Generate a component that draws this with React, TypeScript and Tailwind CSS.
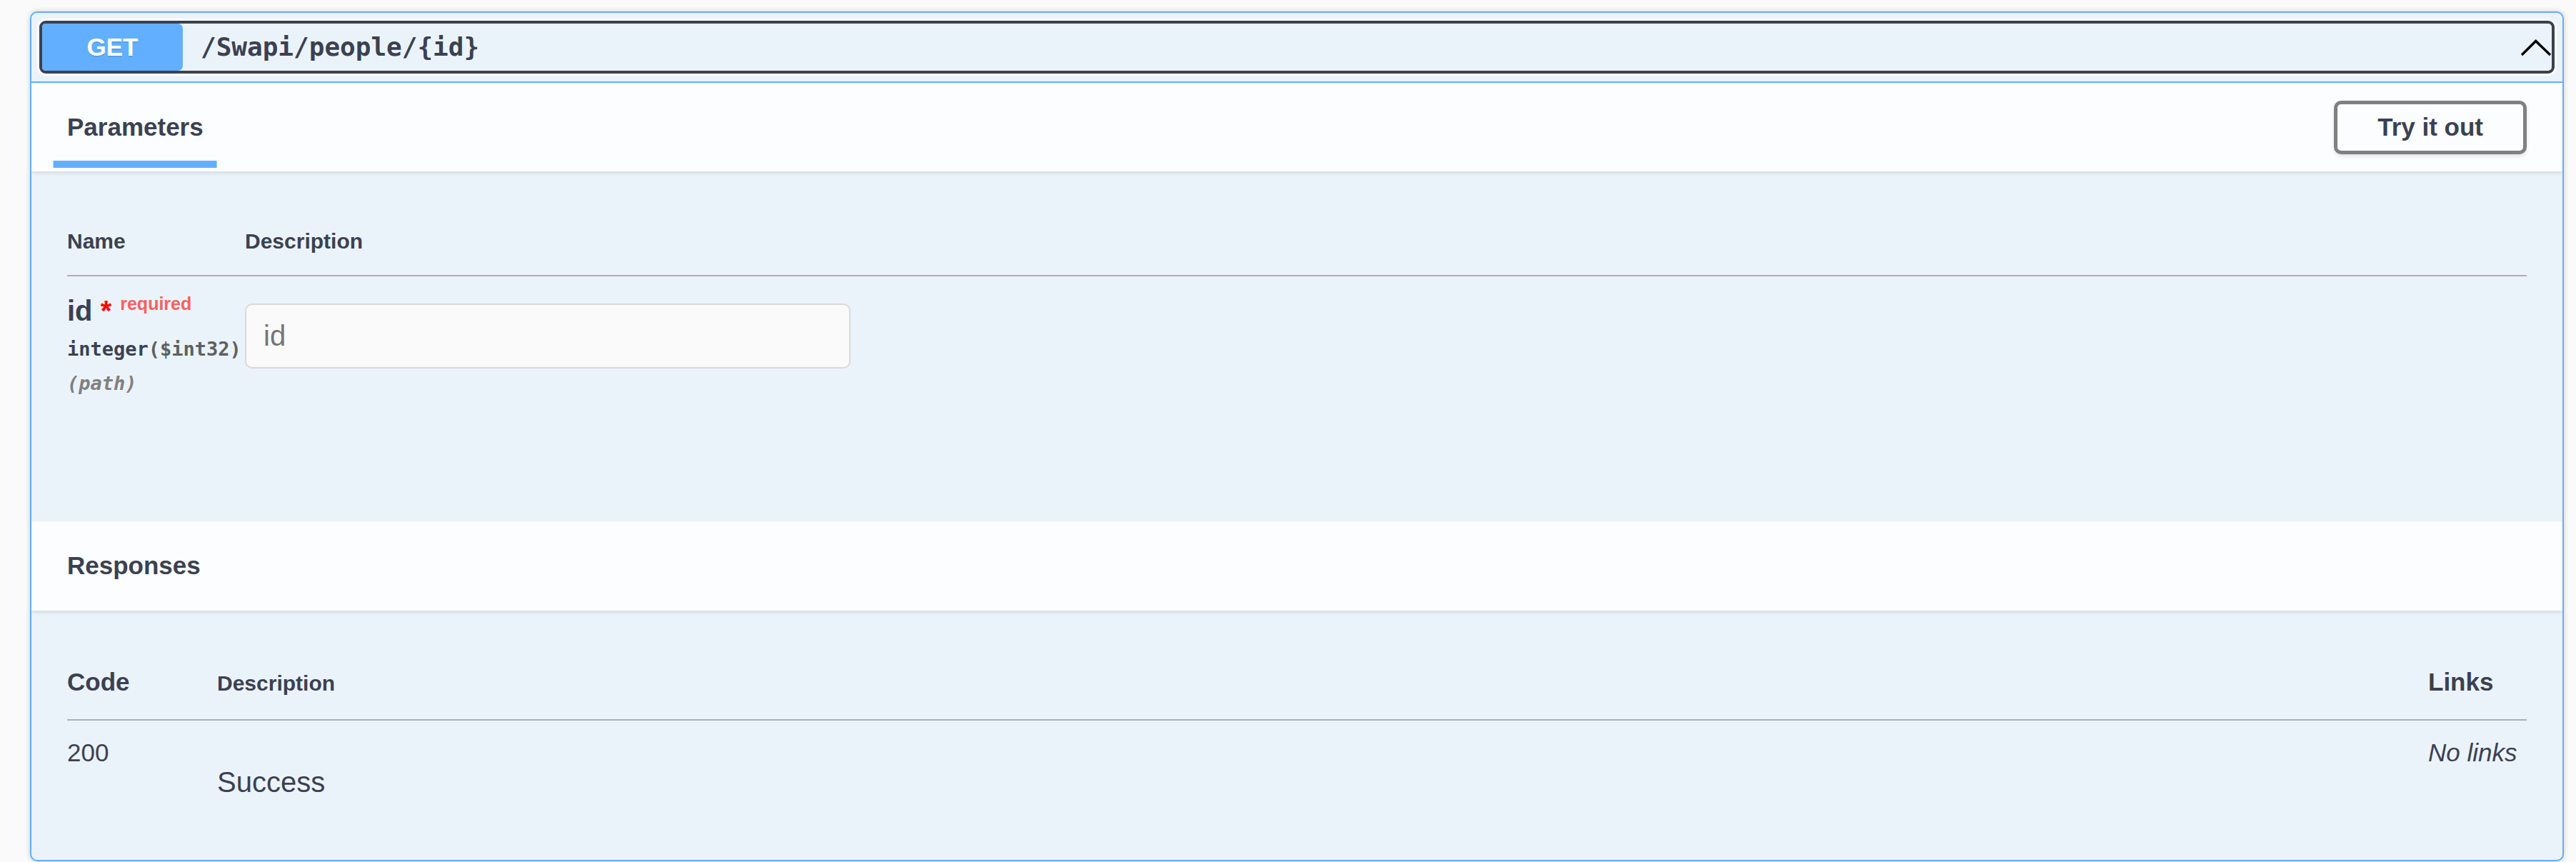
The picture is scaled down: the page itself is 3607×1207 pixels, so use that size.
export default function App() {
  return (
    <div className="min-h-screen bg-[#fafafa] pl-[42px] pr-[17px] pt-[16px] font-['Liberation_Sans',Arial,sans-serif] text-[#3b4151]">
      <div className="overflow-hidden rounded-[10px] border-2 border-[#61affe] bg-[#ebf3fa] shadow-[0_0_7px_rgba(0,0,0,0.19)]">
        {/* Summary bar */}
        <div className="border-b-2 border-[#61affe] p-[8px]">
          <div className="rounded-[12px] border-[3px] border-white">
            <div className="flex h-[74px] items-center overflow-hidden rounded-[9px] border-4 border-[#3b4151]">
              <span className="flex h-full w-[197px] items-center justify-center rounded-r-[7px] bg-[#61affe] text-[35px] font-bold text-white [text-shadow:0_2px_0_rgba(0,0,0,0.1)]">
                GET
              </span>
              <span className="flex-1 pl-[25px] font-['DejaVu_Sans_Mono',monospace] text-[36px] font-bold">
                /Swapi/people/{"{id}"}
              </span>
              <svg width="46" height="66" viewBox="0 0 46 66" className="shrink-0">
                <polyline points="4,44 23.7,24.5 44,44" fill="none" stroke="#000" strokeWidth="3.5" />
              </svg>
            </div>
          </div>
        </div>

        {/* Parameters header */}
        <div className="flex h-[124px] items-center justify-between bg-[#fbfdfe] px-[50px] shadow-[0_2.5px_5px_rgba(0,0,0,0.1)]">
          <h4 className="relative text-[35px] font-bold leading-[40px]">
            Parameters
            <span className="absolute left-1/2 top-[67px] h-[10px] w-[120%] -translate-x-1/2 bg-[#61affe]" />
          </h4>
          <button className="h-[75px] rounded-[10px] border-[5px] border-[#808080] px-[56px] text-[35px] font-bold shadow-[0_2.5px_5px_rgba(0,0,0,0.1)]">
            Try it out
          </button>
        </div>

        {/* Parameters table */}
        <div className="h-[490px] p-[50px]">
          <div className="flex border-b-2 border-[#aab0bb] pb-[30px] pt-[30px] text-[30px] font-bold leading-[35px]">
            <div className="w-[249px]">Name</div>
            <div>Description</div>
          </div>
          <div className="flex pt-[25px]">
            <div className="w-[249px]">
              <div className="text-[40px] font-bold leading-[46px]">
                id<span className="leading-none text-[#ff0000]">&nbsp;*</span>
                <span className="relative -top-[15px] px-[12px] text-[25px] leading-none text-[#f76164]">required</span>
              </div>
              <div className="pb-[16px] pt-[15px] font-['DejaVu_Sans_Mono',monospace] text-[27px] font-bold leading-[32px]">
                integer<span className="text-[#606060]">($int32)</span>
              </div>
              <div className="font-['DejaVu_Sans_Mono',monospace] text-[27px] font-bold italic leading-[32px] text-[#808080]">
                (path)
              </div>
            </div>
            <div className="pt-[13px]">
              <input
                placeholder="id"
                className="h-[91px] w-[848px] rounded-[10px] border-2 border-[#d9d9d9] bg-[#fafafa] px-[24px] text-[40px] outline-none placeholder:text-[#757575]"
              />
            </div>
          </div>
        </div>

        {/* Responses header */}
        <div className="flex h-[125px] items-center bg-[#fbfdfe] px-[50px] shadow-[0_2.5px_5px_rgba(0,0,0,0.1)]">
          <h4 className="text-[35px] font-bold">Responses</h4>
        </div>

        {/* Responses table */}
        <div className="h-[349px] p-[50px]">
          <div className="flex items-baseline border-b-2 border-[#aab0bb] pb-[30px] pt-[30px] font-bold">
            <div className="w-[210px] text-[35px] leading-[40px]">Code</div>
            <div className="flex-1 text-[30px] leading-[40px]">Description</div>
            <div className="w-[138px] text-[35px] leading-[40px]">Links</div>
          </div>
          <div className="flex pt-[25px]">
            <div className="w-[210px] text-[35px] leading-[40px]">200</div>
            <div className="flex-1 pt-[38px] text-[40px] leading-[46px]">Success</div>
            <div className="w-[138px] text-[35px] italic leading-[40px]">No links</div>
          </div>
        </div>
      </div>
    </div>
  );
}
